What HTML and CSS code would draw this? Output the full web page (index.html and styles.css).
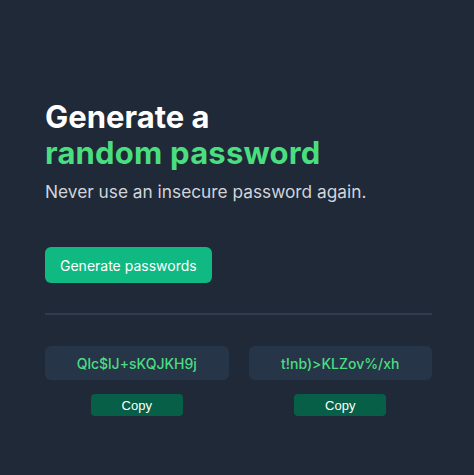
FILE: index.html
```html
<!DOCTYPE html>
<html lang="en">
<head>
  <meta charset="UTF-8" />
  <meta name="viewport" content="width=device-width, initial-scale=1.0" />
  <title>Password Generator</title>
  <link rel="stylesheet" href="styles.css">
</head>
<body>
  <main class="card">
    <h1>Generate a<br><span class="accent">random password</span></h1>
    <p class="lead">Never use an insecure password again.</p>

    <button class="generate" onclick="generate()">Generate passwords</button>

    <hr class="divider" />

    <div class="results">
      <div class="result">
        <div class="pw" id="pw1">Qlc$lJ+sKQJKH9j</div>
        <button class="copy" onclick="copy('pw1')">Copy</button>
      </div>
      <div class="result">
        <div class="pw" id="pw2">t!nb)&gt;KLZov%/xh</div>
        <button class="copy" onclick="copy('pw2')">Copy</button>
      </div>
    </div>
  </main>

  <script>
    const chars = "ABCDEFGHIJKLMNOPQRSTUVWXYZabcdefghijklmnopqrstuvwxyz0123456789~`!@#$%^&*()_-+={[}],|:;<>.?/";

    const randomPassword = (len = 15) => {
      let out = "";
      for (let i = 0; i < len; i++) out += chars[Math.floor(Math.random() * chars.length)];
      return out;
    };

    const generate = () => {
      document.getElementById("pw1").textContent = randomPassword();
      document.getElementById("pw2").textContent = randomPassword();
    };

    const copy = (id) => {
      navigator.clipboard && navigator.clipboard.writeText(document.getElementById(id).textContent);
    };
  </script>
</body>
</html>
```

FILE: styles.css
```css
body { margin: 0; background: #1f2937; font-family: Inter, "Noto Sans", sans-serif; min-height: 100vh; }
.card { padding: 99px 42px 40px 45px; }
h1 { margin: 0; font-size: 31px; line-height: 36px; font-weight: 700; color: #fff; letter-spacing: 0; }
.accent { color: #4ade80; letter-spacing: 0.2px; }
.lead { margin: 9px 0 0; font-size: 17.3px; line-height: 24px; color: #d1d5db; }
.generate { margin-top: 43px; height: 36px; padding: 0 15px; border: none; border-radius: 6px; background: #10b981; color: #fff; font-family: inherit; font-size: 14px; cursor: pointer; }
.divider { margin: 30px 0 0; border: none; height: 2px; background: #2f3b4e; }
.results { display: grid; grid-template-columns: 1fr 1fr; gap: 20px; margin-top: 31px; }
.result { display: flex; flex-direction: column; align-items: center; }
.pw { width: 100%; height: 34px; display: flex; align-items: center; justify-content: center; background: #273549; border-radius: 6px; color: #4ade80; font-size: 14px; font-weight: 500; }
.copy { margin-top: 14px; width: 92px; height: 22px; border: none; border-radius: 4px; background: #065f46; color: #fff; font-family: "Liberation Sans", Arial, sans-serif; font-size: 13px; cursor: pointer; }
```
